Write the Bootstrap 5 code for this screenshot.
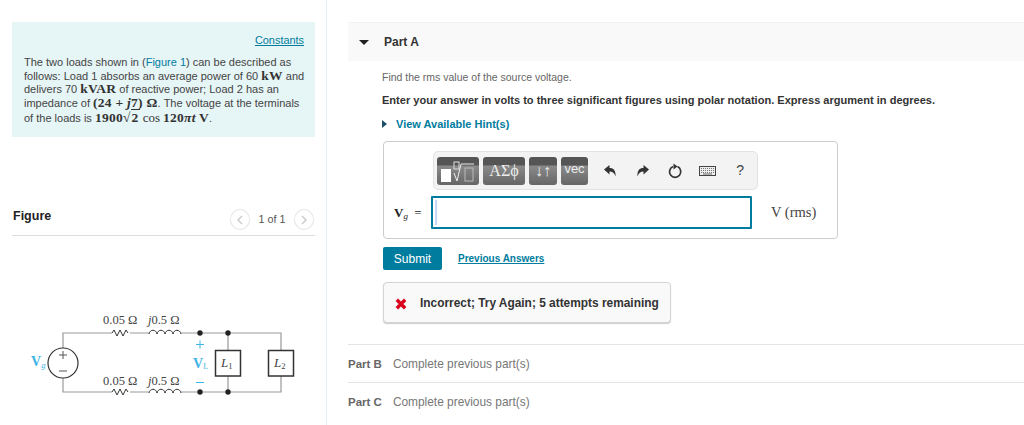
<!DOCTYPE html>
<html lang="en">
<head>
<meta charset="UTF-8">
<title>Part A</title>
<link href="https://cdn.jsdelivr.net/npm/bootstrap@5.3.2/dist/css/bootstrap.min.css" rel="stylesheet">
<style>
    body { font-family: "Liberation Sans", Arial, sans-serif; font-size: 11px; color: #333; height: 425px; overflow: hidden; }
    a { color: #007c9e; }
    .left-col { width: 327px; height: 425px; flex: none; border-right: 1px solid #e6edf5; padding: 22px 11px 0 12px; }
    .intro-box { height: 115px; background: #e6f5f6; padding: 12px 11px 0 12px; line-height: 13.6px; font-size: 11px; color: #444; white-space: nowrap; }
    .constants { text-align: right; margin-bottom: 8px; height: 14px; font-size: 10.9px; }
    .intro-box a.plain { text-decoration: none; }
    .mth { font-family: "Liberation Serif", serif; font-weight: bold; font-size: 13.5px; line-height: 0; letter-spacing: .25px; color: #333; }
    .mth-n { font-family: "Liberation Serif", serif; font-size: 13px; line-height: 0; color: #333; }
    .root { border-top: 1px solid #333; padding: 0 1px; }
    .last-line { display: block; margin-top: 1.5px; }
    .fig-head { margin-top: 70px; height: 29px; border-bottom: 1px solid #ddd; align-items: flex-start; }
    .fig-title { font-size: 12.5px; font-weight: bold; color: #222; line-height: 18px; padding-left: 1px; }
    .pager { font-size: 10.8px; color: #555; gap: 8.5px; margin-top: 2px; margin-right: 1px; }
    .round-btn { width: 20px; height: 21px; border-radius: 50%; border: 1px solid #e6e6e6; background: #fff; padding: 0; }
    .circuit { display: block; margin-top: 65px; }
    .right-col { width: 697px; flex: none; padding: 22px 0 0 21px; }
    .part-head { height: 39px; background: #f9f9f9; padding-left: 11px; gap: 15px; border-top: 1px solid #f2f2f2; }
    .part-name { font-size: 12px; font-weight: bold; color: #333; }
    .caret-down { border-left: 5px solid transparent; border-right: 5px solid transparent; border-top: 5px solid #222; }
    .part-body { padding-left: 34px; }
    .q-line { font-size: 10.5px; color: #666; margin-top: 9px; height: 14px; line-height: 14px; }
    .q-bold { font-size: 11.05px; font-weight: bold; color: #333; margin-top: 9px; height: 14px; line-height: 14px; }
    .hint-link { font-size: 11px; font-weight: bold; text-decoration: none; margin-top: 10px; height: 14px; line-height: 14px; gap: 9px; }
    .caret-right { border-top: 4.5px solid transparent; border-bottom: 4.5px solid transparent; border-left: 5px solid #1e4f66; }
    .answer-box { width: 455px; height: 98px; margin: 10px 0 0 1px; border: 1px solid #ccc; border-radius: 4px; padding-top: 9px; }
    .tool-bar { width: 325px; height: 39px; margin-left: 49px; background: #f3f3f3; border: 1px solid #e2e2e2; border-radius: 5px; padding-left: 3px; }
    .tool-btn { height: 28px; border-radius: 3px; background: linear-gradient(#555 0, #555 8px, #8a8a8a 9px, #666 100%); color: #eee; margin-right: 4px; border: 0; padding: 0; }
    .tool-plain { width: 32.5px; text-align: center; color: #333; font-size: 14px; }
    .answer-row { margin-top: 6px; }
    .v-label { width: 47px; padding-left: 10px; font-family: "Liberation Serif", serif; font-size: 13px; color: #222; white-space: nowrap; }
    .v-label sub { font-style: italic; font-size: 9px; font-weight: normal; margin-right: 3px; }
    .answer-input { width: 321px; height: 33px; border: 2px solid #007c9e; border-radius: 1px; padding: 2px; }
    .text-cursor { width: 2px; height: 25px; background: #c5d8f5; }
    .unit-text { margin-left: 19px; font-family: "Liberation Serif", serif; font-size: 14.5px; color: #444; }
    .submit-btn { width: 59px; height: 23px; padding: 0; background: #007c9e; border: 0; border-radius: 2px; color: #fff; font-size: 12px; font-weight: normal; }
    .prev-link { font-size: 10px; font-weight: bold; margin-left: 16px; }
    .action-row { margin: 8px 0 0 1px; }
    .feedback { width: 288px; height: 41px; margin: 12px 0 0 1px; padding: 2px 0 0 11px; background: #f9f9f9; border: 1px solid #d4d4d4; border-radius: 4px; box-shadow: 0 1px 1px #ccc; gap: 13px; font-size: 11.9px; font-weight: bold; color: #333; }
    .part-row { border-top: 1px solid #e4e4e4; height: 38px; font-size: 11.9px; color: #777; gap: 11px; padding-top: 2px; }
    .part-row b { color: #666; font-size: 11.5px; }
</style>
</head>
<body class="d-flex m-0">

<div class="left-col">
    <div class="intro-box">
        <div class="constants"><a href="#">Constants</a></div>
        <div>
            The two loads shown in (<a class="plain" href="#">Figure 1</a>) can be described as<br>
            follows: Load 1 absorbs an average power of 60 <span class="mth">kW</span> and<br>
            delivers 70 <span class="mth">kVAR</span> of reactive power; Load 2 has an<br>
            impedance of <span class="mth">(24 + <i>j</i>7) Ω</span>. The voltage at the terminals<br>
            <span class="last-line">of the loads is <span class="mth">1900√<span class="root">2</span></span> <span class="mth-n">cos</span> <span class="mth">120<i>πt</i> V</span>.</span>
        </div>
    </div>

    <div class="fig-head d-flex justify-content-between">
        <span class="fig-title">Figure</span>
        <div class="pager d-flex align-items-center">
            <button class="round-btn d-flex align-items-center justify-content-center" type="button">
                <svg width="8" height="10" viewBox="0 0 8 10"><path d="M6 1 2 5l4 4" fill="none" stroke="#ccc" stroke-width="1.5"/></svg>
            </button>
            <span>1 of 1</span>
            <button class="round-btn d-flex align-items-center justify-content-center" type="button">
                <svg width="8" height="10" viewBox="0 0 8 10"><path d="M2 1l4 4-4 4" fill="none" stroke="#ccc" stroke-width="1.5"/></svg>
            </button>
        </div>
    </div>

    <svg class="circuit" width="303" height="110" viewBox="12 301 303 110" font-family="Liberation Serif, serif">
        <g fill="none" stroke="#999" stroke-width="1.2">
            <path d="M63 348V333H112M130 333H149M181 333H281V350M281 376V392H181M149 392H130M112 392H63V378"/>
            <path d="M228 333V350M228 376V392"/>
        </g>
        <g fill="none" stroke="#333" stroke-width="1">
            <path d="M112 333l2-3 3 6 3-6 3 6 3-6 2 3"/>
            <path d="M112 392l2-3 3 6 3-6 3 6 3-6 2 3"/>
            <path d="M149 334c1-5 7-5 8 0c1-5 7-5 8 0c1-5 7-5 8 0c1-5 7-5 8 0"/>
            <path d="M149 393c1-5 7-5 8 0c1-5 7-5 8 0c1-5 7-5 8 0c1-5 7-5 8 0"/>
            <circle cx="63" cy="363" r="15" stroke-width="1.2"/>
            <path d="M59 355h8M63 351v8M59 371h8" stroke="#555"/>
        </g>
        <rect x="215.5" y="350.5" width="25" height="25.5" fill="#fff" stroke="#333" stroke-width="1.5"/>
        <rect x="268.5" y="350.5" width="25" height="25.5" fill="#fff" stroke="#333" stroke-width="1.5"/>
        <g fill="#222">
            <circle cx="200" cy="333" r="2.7"/><circle cx="228" cy="333" r="2.7"/>
            <circle cx="200" cy="392" r="2.7"/><circle cx="228" cy="392" r="2.7"/>
        </g>
        <g font-size="12.5" fill="#444">
            <text x="103" y="324">0.05 Ω</text><text x="148" y="324"><tspan font-style="italic">j</tspan>0.5 Ω</text>
            <text x="103" y="385">0.05 Ω</text><text x="148" y="385"><tspan font-style="italic">j</tspan>0.5 Ω</text>
            <text x="221" y="367" font-size="13" font-style="italic">L<tspan font-size="8.5" dy="2" font-style="normal">1</tspan></text>
            <text x="274" y="367" font-size="13" font-style="italic">L<tspan font-size="8.5" dy="2" font-style="normal">2</tspan></text>
        </g>
        <g fill="#3cb4e5">
            <text x="31" y="366" font-size="14" font-weight="bold">V<tspan font-size="8.5" dy="2" font-style="italic" font-weight="normal">g</tspan></text>
            <text x="193" y="368" font-size="14" font-weight="bold">V<tspan font-size="8" dy="1" font-weight="normal">L</tspan></text>
            <path d="M196 344h8v1h-8zM199.5 340.5h1v8h-1zM196 382h8v1h-8z"/>
        </g>
    </svg>
</div>

<div class="right-col">
    <div class="part-head d-flex align-items-center">
        <span class="caret-down"></span>
        <span class="part-name">Part A</span>
    </div>
    <div class="part-body">
        <div class="q-line">Find the rms value of the source voltage.</div>
        <div class="q-bold">Enter your answer in volts to three significant figures using polar notation. Express argument in degrees.</div>
        <a class="hint-link d-flex align-items-center" href="#"><span class="caret-right"></span>View Available Hint(s)</a>

        <div class="answer-box">
            <div class="tool-bar d-flex align-items-center">
                <button class="tool-btn d-flex align-items-center justify-content-center" type="button" style="width:42px">
                    <svg width="38" height="24" viewBox="0 0 38 24">
                        <rect x="2" y="10" width="10" height="13" fill="#fff"/>
                        <rect x="15" y="3" width="5" height="7" fill="none" stroke="#ddd"/>
                        <path d="M15 14l3 8 4-17h13" fill="none" stroke="#eee" stroke-width="1"/>
                        <rect x="26" y="9" width="8" height="13" fill="none" stroke="#bbb"/>
                    </svg>
                </button>
                <button class="tool-btn" type="button" style="width:42px;font-family:'Liberation Serif',serif;font-size:16px">ΑΣϕ</button>
                <button class="tool-btn" type="button" style="width:28px;font-size:16px">↓↑</button>
                <button class="tool-btn" type="button" style="width:27px;font-size:13px;padding-bottom:3px">vec</button>
                <div class="d-flex align-items-center" style="margin-left:2px">
                    <div class="tool-plain"><svg width="14" height="14" viewBox="0 0 14 14"><path d="M1 5.500 6.500 1v3C10.500 4 13 6.500 12.500 12.500 11.500 9 9.500 7.500 6.500 7.500V10.500Z" fill="#333"/></svg></div>
                    <div class="tool-plain"><svg width="14" height="14" viewBox="0 0 14 14"><path d="M13 5.500 7.500 1v3C3.500 4 1 6.500 1.500 12.500 2.500 9 4.500 7.500 7.500 7.500V10.500Z" fill="#333"/></svg></div>
                    <div class="tool-plain"><svg width="15" height="16" viewBox="0 0 15 16"><path d="M9.500 3.600A5.600 5.600 0 1 1 5 3.500" fill="none" stroke="#333" stroke-width="1.700"/><path d="M5.500 0.500 9.500 3.500 5.500 6.500Z" fill="#333"/></svg></div>
                    <div class="tool-plain"><svg width="17" height="10" viewBox="0 0 17 10"><rect x="0.500" y="0.500" width="16" height="9" fill="#eee" stroke="#444"/><path d="M2 2.500h13M2 4.500h13M2 6.500h13" stroke="#777" stroke-dasharray="1 1"/><path d="M4 8h9" stroke="#666"/></svg></div>
                    <div class="tool-plain" style="font-size:14px;color:#444">?</div>
                </div>
            </div>
            <div class="answer-row d-flex align-items-center">
                <div class="v-label"><b>V</b><sub>g</sub> =</div>
                <div class="answer-input d-flex"><span class="text-cursor"></span></div>
                <span class="unit-text">V (rms)</span>
            </div>
        </div>

        <div class="action-row d-flex align-items-center">
            <button class="btn submit-btn" type="button">Submit</button>
            <a class="prev-link" href="#">Previous Answers</a>
        </div>

        <div class="feedback d-flex align-items-center">
            <svg width="12" height="12" viewBox="1 1 10 10"><path d="M1.500 3.500 3.500 1.500 6 4 8.500 1.500 10.500 3.500 8 6 10.500 8.500 8.500 10.500 6 8 3.500 10.500 1.500 8.500 4 6Z" fill="#d9001b"/></svg>
            <span>Incorrect; Try Again; 5 attempts remaining</span>
        </div>
    </div>

    <div class="part-row d-flex align-items-center" style="margin-top:21px"><b>Part B</b><span>Complete previous part(s)</span></div>
    <div class="part-row d-flex align-items-center"><b>Part C</b><span>Complete previous part(s)</span></div>
</div>

</body>
</html>
